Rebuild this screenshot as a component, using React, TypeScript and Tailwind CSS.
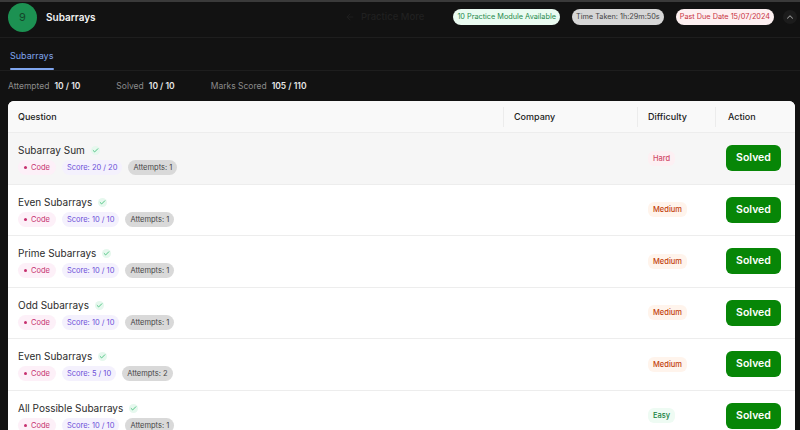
import React from "react";
import { ChevronUp, Check, ArrowLeft } from "lucide-react";

type Row = {
  title: string;
  score: string;
  attempts: string;
  difficulty: "Hard" | "Medium" | "Easy";
};

const rows: Row[] = [
  { title: "Subarray Sum", score: "20 / 20", attempts: "1", difficulty: "Hard" },
  { title: "Even Subarrays", score: "10 / 10", attempts: "1", difficulty: "Medium" },
  { title: "Prime Subarrays", score: "10 / 10", attempts: "1", difficulty: "Medium" },
  { title: "Odd Subarrays", score: "10 / 10", attempts: "1", difficulty: "Medium" },
  { title: "Even Subarrays", score: "5 / 10", attempts: "2", difficulty: "Medium" },
  { title: "All Possible Subarrays", score: "10 / 10", attempts: "1", difficulty: "Easy" },
];

function Difficulty({ d }: { d: Row["difficulty"] }) {
  if (d === "Hard")
    return <span className="rounded-md bg-[#fdf0f3] px-[5px] py-[2px] text-[7.5px] font-medium text-[#d14b6a]">Hard</span>;
  if (d === "Medium")
    return <span className="rounded-md bg-[#fff4ec] px-[5px] py-[2px] text-[7.5px] font-medium text-[#c2410c]">Medium</span>;
  return <span className="rounded-md bg-[#eefbf3] px-[5px] py-[2px] text-[7.5px] font-medium text-[#15803d]">Easy</span>;
}

export default function App() {
  return (
    <div
      className="h-[430px] w-[800px] overflow-hidden border-t-2 border-[#3a3a3a] bg-[#121212]"
      style={{ fontFamily: "Inter, 'Noto Sans', sans-serif" }}
    >
      {/* Header */}
      <div className="flex h-[36px] items-start border-b border-[#1e1e1e]">
        <div className="flex h-[30px] w-full items-center whitespace-nowrap">
          <div className="ml-2 flex h-[29px] w-[29px] shrink-0 items-center justify-center rounded-full bg-[#1c9152] text-[11px] text-[#14472a]">
            9
          </div>
          <div className="ml-[9px] w-[299px] shrink-0 text-[10px] font-semibold text-[#f3f3f3]">Subarrays</div>
          <div className="flex items-center gap-[6px] text-[9.5px] font-medium text-[#202020]">
            <ArrowLeft size={10} strokeWidth={2} />
            <span>Practice More</span>
          </div>
          <div className="ml-auto flex items-center">
            <span className="rounded-full bg-[#eafbf1] px-[4px] py-[3px] text-[7.3px] text-[#1f8a4c]">
              10 Practice Module Available
            </span>
            <span className="ml-[12px] rounded-full bg-[#d6d6d6] px-[4px] py-[3px] text-[7.3px] text-[#444]">
              Time Taken: 1h:29m:50s
            </span>
            <span className="ml-[12px] rounded-full bg-[#fdf0f1] px-[4px] py-[3px] text-[7.3px] text-[#c8333f]">
              Past Due Date 15/07/2024
            </span>
          </div>
          <div className="ml-[9px] mr-[3px] flex h-[14px] w-[14px] shrink-0 items-center justify-center rounded-full bg-[#1c1c1c] text-[#9a9a9a]">
            <ChevronUp size={10} strokeWidth={2.5} />
          </div>
        </div>
      </div>

      {/* Tabs */}
      <div className="flex h-[33px] items-end border-b border-[#1e1e1e] px-2">
        <div className="flex flex-col items-center">
          <span className="px-[2px] pb-[6px] text-[9px] text-[#7fa5ee]">Subarrays</span>
          <div className="h-[2px] w-[44px] rounded-full bg-[#7fa5ee]" />
        </div>
      </div>

      {/* Stats */}
      <div className="flex h-[30px] items-center whitespace-nowrap px-2 text-[8.5px]">
        <span className="text-[#8b8b8b]">Attempted</span>
        <span className="ml-[5px] font-semibold text-[#e8e8e8]">10 / 10</span>
        <span className="ml-[36px] text-[#8b8b8b]">Solved</span>
        <span className="ml-[5px] font-semibold text-[#e8e8e8]">10 / 10</span>
        <span className="ml-[36px] text-[#8b8b8b]">Marks Scored</span>
        <span className="ml-[5px] font-semibold text-[#e8e8e8]">105 / 110</span>
      </div>

      {/* Table */}
      <div className="ml-2 mr-[5px] overflow-hidden rounded-t-md bg-white">
        <div className="grid h-[32px] grid-cols-[495px_134px_78px_1fr] items-center border-b border-[#ededed] bg-[#f9f9f9] text-[9px] font-medium text-[#222]">
          <div className="pl-[10px]">Question</div>
          <div className="flex h-[20px] items-center border-l border-[#ececec] pl-[10px]">Company</div>
          <div className="flex h-[20px] items-center border-l border-[#ececec] pl-[10px]">Difficulty</div>
          <div className="flex h-[20px] items-center border-l border-[#ececec] pl-[12px]">Action</div>
        </div>
        {rows.map((r, i) => (
          <div
            key={i}
            className={
              "grid h-[51.5px] grid-cols-[495px_134px_78px_1fr] items-center border-b border-[#ededed] " +
              (i === 0 ? "bg-[#f6f6f6]" : "bg-white")
            }
          >
            <div className="pl-[10px] pt-[2px]">
              <div className="flex items-center gap-[6px]">
                <span className="text-[10px] text-[#2b2b2b]">{r.title}</span>
                <span className="flex h-[9px] w-[9px] items-center justify-center rounded-full bg-[#e6f8ee] text-[#3fbf77]">
                  <Check size={7} strokeWidth={3} />
                </span>
              </div>
              <div className="mt-[2px] flex items-center gap-[6px] whitespace-nowrap text-[7.5px]">
                <span className="flex items-center gap-[4px] rounded-full bg-[#fdf0f8] px-[6px] py-[2px] text-[#c6306f]">
                  <span className="h-[3px] w-[3px] rounded-full bg-[#c6306f]" />
                  Code
                </span>
                <span className="rounded-full bg-[#f4f1fd] px-[5px] py-[2px] text-[#6b4fd8]">Score: {r.score}</span>
                <span className="rounded-full bg-[#d9d9d9] px-[5px] py-[2px] text-[#454545]">Attempts: {r.attempts}</span>
              </div>
            </div>
            <div />
            <div className="flex items-center pl-[11px]">
              <Difficulty d={r.difficulty} />
            </div>
            <div className="flex items-center pl-[11px]">
              <button className="h-[26px] w-[55px] rounded-md bg-[#078607] text-[10.5px] font-semibold text-white">
                Solved
              </button>
            </div>
          </div>
        ))}
      </div>
    </div>
  );
}
